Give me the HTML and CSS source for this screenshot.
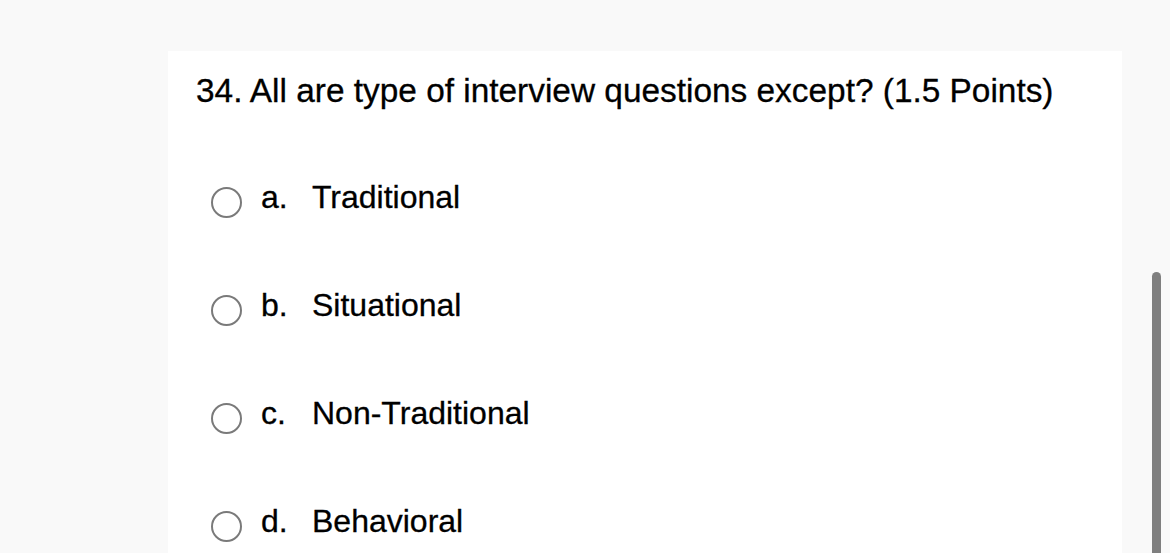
FILE: index.html
```html
<!DOCTYPE html>
<html>
<head>
<meta charset="utf-8">
<link rel="stylesheet" href="styles.css">
</head>
<body>
<div class="page">
  <div class="card">
    <div class="question">34. All are type of interview questions except? (1.5 Points)</div>
    <div class="options">
      <div class="option"><span class="radio"></span><span class="letter">a.</span><span class="label">Traditional</span></div>
      <div class="option"><span class="radio"></span><span class="letter">b.</span><span class="label">Situational</span></div>
      <div class="option"><span class="radio"></span><span class="letter">c.</span><span class="label">Non-Traditional</span></div>
      <div class="option"><span class="radio"></span><span class="letter">d.</span><span class="label">Behavioral</span></div>
    </div>
  </div>
  <div class="scrolltrack"><div class="thumb"></div></div>
</div>
</body>
</html>
```
FILE: styles.css
```css
html, body {
  margin: 0;
  padding: 0;
  background: #f9f9f9;
  height: 100%;
  overflow: hidden;
}
.page {
  display: flex;
  height: 553px;
  font-family: "Liberation Sans", Arial, sans-serif;
  color: #000;
  -webkit-text-stroke: 0.3px #000;
}
.card {
  margin-left: 168px;
  margin-top: 51px;
  width: 954px;
  background: #fff;
  padding: 22px 0 0 28px;
  box-sizing: border-box;
}
.question {
  font-size: 33.4px;
  line-height: 36px;
}
.options {
  margin-top: 34px;
  display: flex;
  flex-direction: column;
}
.option {
  display: flex;
  align-items: center;
  height: 108px;
  font-size: 32px;
}
.radio {
  width: 27px;
  height: 27px;
  border: 2px solid #7a7a7a;
  border-radius: 50%;
  margin-left: 15px;
  margin-right: 19px;
  margin-top: 10px;
  flex: none;
}
.letter {
  width: 51px;
  flex: none;
}
.scrolltrack {
  margin-left: 30px;
  padding-top: 272px;
}
.thumb {
  width: 9px;
  height: 300px;
  background: #7f7f7f;
  border-radius: 5px 5px 0 0;
}
```
